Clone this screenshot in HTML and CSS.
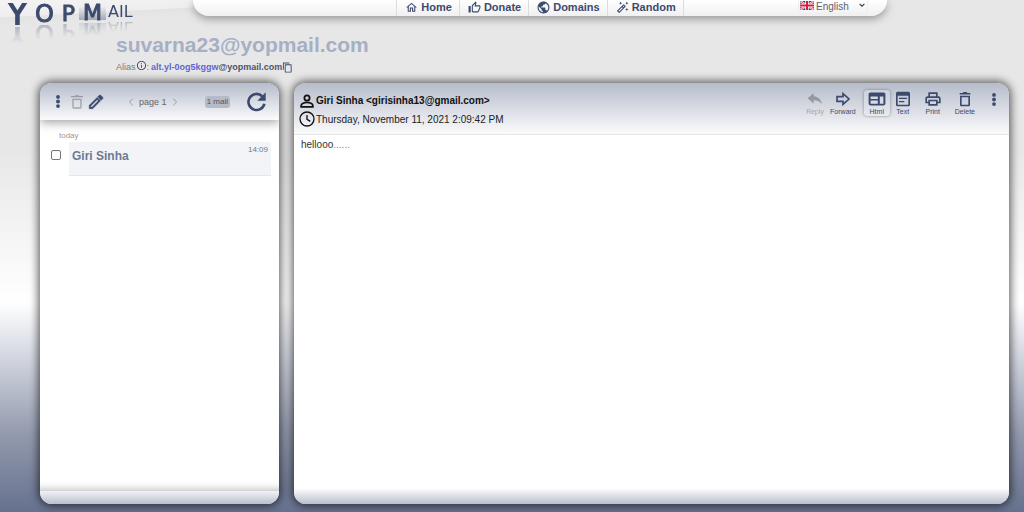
FILE: index.html
```html
<!DOCTYPE html>
<html lang="en">
  <head>
    <meta charset="UTF-8" />
    <meta name="viewport" content="width=device-width, initial-scale=1.0" />
    <title>YOPmail - Inbox</title>
    <link rel="stylesheet" href="styles.css">
  </head>

  <body>
    <header class="top">
      <a class="logo" href="#" aria-label="YOPmail">
        <span class="l1">Y</span>
        <span class="l2">O</span>
        <span class="l3">P</span>
        <span class="l4">M</span>
        <span class="l5">AIL</span>
      </a>
      <nav class="nav">
        <ul class="menu">
          <li><a href="#"><svg viewBox="0 0 24 24"><path d="M12 5.700l5 4.500V18h-2v-6H9v6H7v-7.800l5-4.500M12 3L2 12h3v8h6v-6h2v6h6v-8h3L12 3z"/></svg>Home</a></li>
          <li><a href="#"><svg viewBox="0 0 24 24"><path d="M9 21h9c.83 0 1.540-.5 1.840-1.220l3.020-7.050c.09-.23.14-.47.14-.73v-2c0-1.100-.9-2-2-2h-6.310l.95-4.570.03-.32c0-.41-.17-.79-.44-1.060L14.170 1 7.580 7.590C7.220 7.950 7 8.450 7 9v10c0 1.100.9 2 2 2zM9 9l4.340-4.340L12 10h9v2l-3 7H9V9zM1 9h4v12H1z"/></svg>Donate</a></li>
          <li><a href="#"><svg viewBox="0 0 24 24"><path d="M12 1C5.900 1 1 5.900 1 12s4.900 11 11 11 11-4.900 11-11S18.100 1 12 1zm-1 19.900C6.500 20.300 3 16.600 3 12c0-.7.1-1.300.2-1.900L8.500 15.400v1.100c0 1.200 1 2.200 2.500 2.200v2.200zm7.600-2.800c-.3-.9-1.100-1.500-2.100-1.500h-1.100v-3.300c0-.6-.5-1.100-1.100-1.100H7.700V10h2.200c.6 0 1.100-.5 1.100-1.100V6.700h2.200c1.200 0 2.200-1 2.200-2.200V4c3.200 1.300 5.500 4.400 5.500 8 0 2.300-.9 4.500-2.300 6.100z"/></svg>Domains</a></li>
          <li><a href="#"><svg viewBox="0 0 24 24"><path d="M20 7l.94-2.060L23 4l-2.060-.94L20 1l-.94 2.060L17 4l2.060.94zM8.500 7l.94-2.060L11.500 4l-2.060-.94L8.500 1l-.94 2.060L5.500 4l2.060.94zM20 12.500l-.94 2.060-2.060.94 2.060.94.94 2.060.94-2.060L23 15.500l-2.060-.94zM17.710 9.120l-2.830-2.830c-.2-.19-.45-.29-.71-.29s-.51.1-.71.290L2.290 17.460c-.39.39-.39 1.020 0 1.410l2.830 2.830c.2.2.45.3.71.3s.51-.1.710-.29l11.170-11.170c.39-.39.39-1.030 0-1.420zM14.170 8.420l1.410 1.410-1.460 1.460-1.410-1.410 1.460-1.460zM5.830 19.590l-1.410-1.410 6.870-6.870 1.410 1.410-6.870 6.870z"/></svg>Random</a></li>
        </ul>
        <div class="lang">
          <svg class="flag" viewBox="0 0 28 18">
            <path fill="#2b4a8c" d="M0 0h28v18H0z"/>
            <path stroke="#fff" stroke-width="4" d="M0 0l28 18M28 0L0 18"/>
            <path stroke="#d8203c" stroke-width="1.500" d="M0 0l28 18M28 0L0 18"/>
            <path stroke="#fff" stroke-width="7" d="M14 0v18M0 9h28"/>
            <path stroke="#d8203c" stroke-width="4" d="M14 0v18M0 9h28"/>
          </svg>
          <select aria-label="Language">
            <option>English</option>
          </select>
          <svg class="arrow" viewBox="0 0 10 6"><path d="M1 1l4 4 4-4"/></svg>
        </div>
      </nav>
    </header>

    <div class="account">
      <h1>suvarna23@yopmail.com</h1>
      <p class="alias">
        <span>Alias</span>
        <svg class="info" viewBox="0 0 24 24"><path d="M11 7h2v2h-2zm0 4h2v6h-2zm1-9C6.480 2 2 6.480 2 12s4.480 10 10 10 10-4.480 10-10S17.520 2 12 2zm0 18c-4.410 0-8-3.590-8-8s3.590-8 8-8 8 3.590 8 8-3.590 8-8 8z"/></svg>
        <span class="colon">:</span>
        <b><a href="#">alt.yl-0og5kggw</a>@yopmail.com</b>
        <button class="copy" aria-label="Copy"><svg viewBox="0 0 24 24"><path d="M16 1H4c-1.100 0-2 .9-2 2v14h2V3h12V1zm3 4H8c-1.100 0-2 .9-2 2v14c0 1.100.9 2 2 2h11c1.100 0 2-.9 2-2V7c0-1.100-.9-2-2-2zm0 16H8V7h11v14z"/></svg></button>
      </p>
    </div>

    <main class="boxes">
      <aside class="box inbox">
        <div class="bar">
          <button aria-label="More"><svg viewBox="0 0 24 24"><circle cx="12" cy="3.500" r="3.500"/><circle cx="12" cy="12" r="3.500"/><circle cx="12" cy="20.500" r="3.500"/></svg></button>
          <button class="off" aria-label="Empty inbox"><svg viewBox="0 0 24 24"><path d="M5 7v13c0 1.100.9 2 2 2h10c1.100 0 2-.9 2-2V7H5zm12 13H7V9h10v11zM15.500 3l-1-1h-5l-1 1H3v2h18V3z"/></svg></button>
          <button aria-label="New message"><svg viewBox="0 0 24 24"><path d="M2 17V22h5L18.700 10.300l-5-5L2 17zM6 20H4v-2L13.700 8.300l2 2L6 20zM22 7c.6-.6.6-1.500 0-2.100L19.100 2c-.6-.6-1.500-.6-2.100 0l-2.300 2.300 5 5L22 7z" stroke="#3c4a6e"/></svg></button>
          <div class="pages">
            <button aria-label="Previous page"><svg viewBox="0 0 6 10"><path d="M5 1L1 5l4 4"/></svg></button>
            <span>page 1</span>
            <button aria-label="Next page"><svg viewBox="0 0 6 10"><path d="M1 1l4 4-4 4"/></svg></button>
          </div>
          <span class="count">1 mail</span>
          <button class="refresh" aria-label="Refresh"><svg viewBox="0 0 24 24"><path fill="none" stroke="#3c4a6e" stroke-width="3" d="M18.500 6A9.200 9.200 0 1 0 21 14.500"/><path d="M22.500 1.500v9.500H13z"/></svg></button>
        </div>
        <div class="list">
          <p class="day">today</p>
          <div class="mail">
            <input type="checkbox" aria-label="Select Giri Sinha" />
            <a href="#"><b>Giri Sinha</b><span>14:09</span></a>
          </div>
        </div>
        <div class="foot"></div>
      </aside>

      <section class="box message">
        <div class="head">
          <div class="from">
            <p><svg viewBox="0 0 24 24"><circle cx="12" cy="7" r="4.500"/><path d="M2 22v-2.500c0-3 5.500-5 10-5s10 2 10 5V22z"/></svg><b>Giri Sinha &lt;girisinha13@gmail.com&gt;</b></p>
            <p><svg viewBox="0 0 24 24"><circle cx="12" cy="12" r="10.500"/><path d="M12 6v6.500l5 3"/></svg><span>Thursday, November 11, 2021 2:09:42 PM</span></p>
          </div>
          <div class="tools">
            <div class="group">
              <button class="off"><svg viewBox="0 0 24 24"><path d="M10 8V3l-9 8 9 8v-5.100c5.500 0 9.500 2 12.500 6.100-1-6-4.500-11-12.500-12z"/></svg>Reply</button>
              <button><svg viewBox="0 0 24 24"><path fill="none" stroke="#3c4a6e" stroke-width="2.500" d="M3 8.500h9V4l9 8-9 8v-4.500H3z"/></svg>Forward</button>
              <div class="formats">
                <button class="current"><svg class="wide" viewBox="0 2 24 20"><path fill-rule="evenodd" d="M4 4h16c1.500 0 2.500 1 2.500 2v12c0 1-1 2-2.500 2H4c-1.500 0-2.500-1-2.500-2V6c0-1 1-2 2.500-2zM4 9v3h9V9zM4 14v4h9v-4zM15.500 9v9H20V9z"/></svg>Html</button>
                <button><svg viewBox="0 0 24 24"><path fill-rule="evenodd" d="M4 1h16c1 0 2.500.9 2.500 2v18c0 1.100-1.500 2-2.500 2H4c-1 0-2.500-.9-2.500-2V3c0-1.100 1.500-2 2.500-2zM4 7v13.500h16V7zM6 10h12v2H6zM6 15h8v2H6z"/></svg>Text</button>
              </div>
            </div>
            <button><svg viewBox="0 0 24 24"><path fill-rule="evenodd" d="M20 8h-1V2H5v6H4c-1.700 0-3.500 1.300-3.500 3v7.500H5V22h14v-3.500h4.500V11c0-1.700-1.800-3-3.500-3zM7.500 4.500h9V8h-9zM7.500 15.500h9v4h-9zM5 16H3v-4.500c0-.5.4-1 1-1h16c.6 0 1 .5 1 1V16h-2v-3H5z"/></svg>Print</button>
            <button><svg viewBox="0 0 24 24"><path fill-rule="evenodd" d="M4.500 7v14c0 1.100.9 2 2 2h11c1.100 0 2-.9 2-2V7zM7 9.500h10v11H7zM15.500 3l-1-1.500h-5L8.500 3H4v2.200h16V3z"/></svg>Delete</button>
            <button class="more" aria-label="More"><svg viewBox="0 0 24 24"><circle cx="12" cy="3.500" r="3.500"/><circle cx="12" cy="12" r="3.500"/><circle cx="12" cy="20.500" r="3.500"/></svg></button>
          </div>
        </div>
        <div class="body">hellooo<span>......</span></div>
        <div class="foot"></div>
      </section>
    </main>
  </body>
</html>
```
FILE: styles.css
```css
* {
  margin: 0;
  padding: 0;
  box-sizing: border-box;
}

body {
  display: flex;
  flex-direction: column;
  min-height: 100vh;
  font-family: "Liberation Sans", Arial, sans-serif;
  font-size: 10px;
  color: #3c4a6e;
  background: linear-gradient(#e7e7e7 0, #e7e7e7 29%, #fff 59%, #cdd1dc 71%, #9299ad 85%, #66718e 100%);
}

ul {
  list-style: none;
}

a {
  color: inherit;
  text-decoration: none;
}

button {
  border: 0;
  background: none;
  color: inherit;
  font-family: inherit;
  cursor: pointer;
}

svg {
  display: block;
  flex: none;
  fill: #3c4a6e;
}

/* header */
.top {
  display: flex;
  align-items: flex-start;
  height: 33px;
}

.logo {
  display: flex;
  align-items: flex-start;
  width: 193px;
  height: 33px;
  padding: 6px 0 0 4px;
  font-family: "DejaVu Sans", sans-serif;
  color: #3c4a6e;
  /* light area behind the logo */
  background: linear-gradient(177deg, #f4f4f4 0, #eee 17px, #e3e3e3 18px, #e7e7e7 26px);
}

.logo span {
  -webkit-box-reflect: below 3px linear-gradient(transparent 10%, rgba(0, 0, 0, 0.3));
}

.logo .l1 {
  width: 27px;
  font-size: 26px;
  line-height: 18px;
  text-align: center;
  -webkit-text-stroke: 2px #3c4a6e;
}

.logo .l2 {
  width: 27px;
  font-size: 24px;
  line-height: 16px;
  text-align: center;
  -webkit-text-stroke: 1px #3c4a6e;
}

.logo .l3 {
  width: 21px;
  font-size: 22px;
  line-height: 15px;
  text-align: center;
  -webkit-text-stroke: 1px #3c4a6e;
}

.logo .l4 {
  width: 27px;
  font-size: 22px;
  line-height: 14px;
  text-align: center;
  -webkit-text-stroke: 1px #3c4a6e;
  background: linear-gradient(#f0f0f0, #a3a8b6);
}

.logo .l5 {
  padding-left: 2px;
  font-size: 16px;
  line-height: 12px;
}

.nav {
  display: grid;
  grid-template-columns: 1fr auto 1fr;
  flex: 1;
  height: 16px;
  margin-right: 137px;
  padding-right: 19px;
  padding-left: 19px;
  border-radius: 0 0 22px 22px;
  background: linear-gradient(#fff, #f0f0f0);
  box-shadow: 0 3px 8px rgba(0, 0, 0, 0.35);
}

.menu {
  display: flex;
  grid-column: 2;
  border-right: 1px solid #dcdcdc;
}

.menu a {
  display: flex;
  align-items: center;
  gap: 3px;
  height: 14px;
  padding: 0 7px 0 8px;
  font-size: 11px;
  font-weight: bold;
}

.menu li {
  border-left: 1px solid #dcdcdc;
}

.menu svg {
  width: 13px;
  height: 13px;
}

.lang {
  position: relative;
  justify-self: end;
  width: 70px;
  height: 14px;
}

.lang select {
  display: block;
  width: 100%;
  height: 14px;
  padding: 0 12px 0 17px;
  border: 1px solid #eee;
  border-top: 0;
  border-radius: 0 0 3px 3px;
  background: none;
  color: #5c6272;
  font-family: inherit;
  font-size: 10px;
  appearance: none;
}

.flag,
.arrow {
  position: absolute;
  pointer-events: none;
}

.flag {
  top: 1px;
  left: 2px;
  width: 14px;
  height: 9px;
}

.arrow {
  top: 3px;
  right: 3px;
  width: 6px;
  height: 4px;
  fill: none;
  stroke: #444;
  stroke-width: 2;
}

/* address */
.account {
  height: 50px;
  padding-left: 116px;
}

.account h1 {
  font-size: 21px;
  line-height: 24px;
  color: #a6afc4;
}

.alias {
  display: flex;
  align-items: center;
  height: 20px;
  font-size: 9px;
  color: #777;
}

.alias b {
  color: #4a5570;
}

.alias a {
  color: #6464d2;
}

.info {
  width: 11px;
  height: 11px;
  margin-bottom: 4px;
}

.colon {
  margin-right: 2px;
}

.copy svg {
  width: 11px;
  height: 11px;
}

/* the two boxes */
.boxes {
  display: flex;
  flex: 1;
  gap: 15px;
  padding: 0 15px 8px 40px;
}

.box {
  display: flex;
  flex-direction: column;
  border-radius: 12px;
  background: #fff;
  box-shadow: 0 0 9px 2px rgba(0, 0, 0, 0.6);
  overflow: hidden;
}

.foot {
  height: 13px;
  background: linear-gradient(#f1f2f6, #b9bfcc);
}

.off {
  opacity: 0.4;
  filter: grayscale(1);
}

/* left */
.inbox {
  width: 239px;
}

.bar {
  display: flex;
  align-items: center;
  height: 37px;
  padding: 0 12px 0 10px;
  background: linear-gradient(#b6bccb, #fbfbfc);
  box-shadow: 0 2px 10px rgba(0, 0, 0, 0.4);
}

.bar svg {
  width: 16px;
  height: 16px;
}

.bar button + button {
  margin-left: 3px;
}

.bar button:first-child svg {
  height: 13px;
}

.pages {
  display: flex;
  align-items: center;
  gap: 5px;
  margin-left: 24px;
  font-size: 9px;
  color: #666;
}

.pages svg,
.pages button:first-child svg {
  width: 6px;
  height: 8px;
  fill: none;
  stroke: #888;
}

.pages button + button {
  margin-left: 0;
}

.count {
  margin-left: auto;
  padding: 0 2px;
  border-radius: 3px;
  background: #b4bac9;
  font-size: 8px;
  line-height: 12px;
  color: #555;
}

.bar .refresh {
  margin-left: 16px;
}

.refresh svg {
  width: 21px;
  height: 21px;
}

.list {
  flex: 1;
  padding: 10px 8px 0;
  box-shadow: inset 0 -10px 9px -9px rgba(0, 0, 0, 0.3);
}

.day {
  padding-left: 11px;
  font-size: 8px;
  line-height: 12px;
  color: #999;
}

.mail {
  display: flex;
}

.mail input {
  flex: none;
  width: 10px;
  height: 10px;
  margin: 8px 8px 0 3px;
  border: 1px solid #777;
  border-radius: 2px;
  background: #fff;
  appearance: none;
}

.mail a {
  display: flex;
  flex: 1;
  justify-content: space-between;
  height: 34px;
  padding: 3px;
  border-bottom: 1px solid #e4e6ea;
  background: #f2f4f7;
  color: #6b7a94;
}

.mail b {
  font-size: 12px;
  line-height: 22px;
}

.mail span {
  font-size: 8px;
  line-height: 10px;
}

/* right */
.message {
  flex: 1;
}

.head {
  display: flex;
  justify-content: space-between;
  height: 52px;
  padding: 7px 7px 0 5px;
  border-bottom: 1px solid #e6e6e6;
  background: linear-gradient(#b6bccb, #fbfbfc);
}

.from p {
  display: flex;
  align-items: center;
  gap: 1px;
  height: 21px;
  color: #222;
}

.from p:last-child {
  height: 16px;
}

.from b {
  color: #111;
}

.from svg {
  width: 16px;
  height: 16px;
  fill: none;
  stroke: #111;
  stroke-width: 2;
}

.from p:first-child svg {
  height: 14px;
  stroke-width: 3;
}

.tools,
.group,
.formats {
  display: flex;
  align-items: flex-start;
}

.tools {
  gap: 8px;
}

.formats {
  gap: 2px;
  margin-left: 5px;
}

.tools button {
  display: flex;
  flex-direction: column;
  align-items: center;
  height: 26px;
  padding: 1px 3px 0;
  font-size: 7px;
  line-height: 10px;
}

.tools svg {
  width: 16px;
  height: 16px;
}

.tools .wide {
  width: 20px;
}

.tools .current {
  border-radius: 3px;
  background: rgba(255, 255, 255, 0.2);
  box-shadow: 0 0 3px rgba(0, 0, 0, 0.4);
}

.tools .more {
  padding: 3px 0 0;
}

.tools .more svg {
  height: 13px;
}

.message .foot {
  height: 15px;
  background: linear-gradient(#fbfbfc, #b9bfcc);
}

.body {
  flex: 1;
  padding: 4px 7px;
  line-height: 12px;
  color: #333;
}

.body span {
  color: #888;
}
```
